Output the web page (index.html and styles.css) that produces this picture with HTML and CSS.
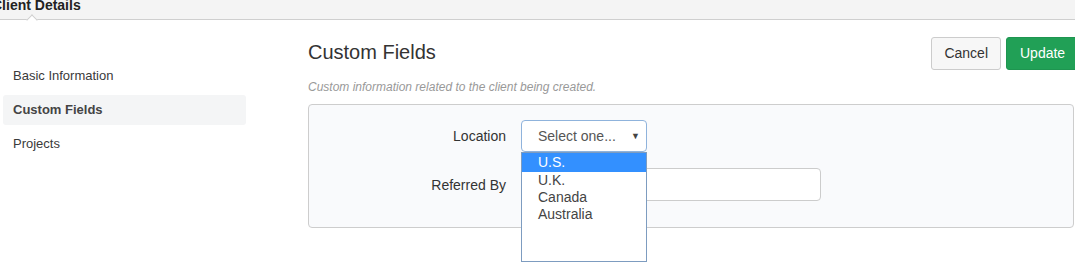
FILE: index.html
```html
<!DOCTYPE html>
<html>
    <head>
        <title>Client Details</title>
        <meta charset="UTF-8">
        <link rel="stylesheet" href="styles.css">
    </head>
    <body>
        <div class="top-bar">
            <p class="top-title">Client Details</p>
        </div>
        <div class="page">
            <div class="side-menu">
                <p class="menu-item">Basic Information</p>
                <p class="menu-item active">Custom Fields</p>
                <p class="menu-item">Projects</p>
            </div>
            <div class="main">
                <div class="main-head">
                    <h1 class="main-title">Custom Fields</h1>
                    <div class="buttons">
                        <div class="btn btn-cancel">Cancel</div>
                        <div class="btn btn-update">Update</div>
                    </div>
                </div>
                <p class="subtitle">Custom information related to the client being created.</p>
                <div class="fields">
                    <div class="field-row">
                        <label class="field-label">Location</label>
                        <div class="select-wrap">
                            <div class="select-box">
                                <span>Select one...</span>
                                <span class="arrow">&#9660;</span>
                            </div>
                            <div class="select-list">
                                <div class="option highlighted">U.S.</div>
                                <div class="option">U.K.</div>
                                <div class="option">Canada</div>
                                <div class="option">Australia</div>
                            </div>
                        </div>
                    </div>
                    <div class="field-row">
                        <label class="field-label">Referred By</label>
                        <div class="text-input"></div>
                    </div>
                </div>
            </div>
        </div>
    </body>
</html>
```

FILE: styles.css
```css
html{
    overflow: hidden;
}

body{
    margin: 0;
    min-height: 264px;
    background: white;
    font-family: "Liberation Sans", Arial, sans-serif;
    color: #333;
}

.top-bar{
    position: relative;
    height: 19px;
    background: #f4f4f4;
    border-bottom: 1px solid #cfcfcf;
}

/* little notch under the title */
.top-bar::after{
    content: "";
    position: absolute;
    left: 28px;
    bottom: -5px;
    width: 7px;
    height: 7px;
    background: white;
    border-top: 1px solid #cfcfcf;
    border-left: 1px solid #cfcfcf;
    transform: rotate(45deg);
}

.top-title{
    margin: 0 0 0 -8px;
    font-size: 14px;
    font-weight: bold;
    line-height: 20px;
    color: #222;
    position: relative;
    top: -5px;
}

.page{
    display: flex;
}

.side-menu{
    flex-shrink: 0;
    width: 243px;
    margin-left: 3px;
    padding-top: 41px;
    display: flex;
    flex-direction: column;
    gap: 4px;
}

.menu-item{
    margin: 0;
    height: 30px;
    line-height: 30px;
    padding-left: 10px;
    font-size: 13px;
    color: #3a3a3a;
    border-radius: 3px;
}

.active{
    background: #f4f5f6;
    font-weight: bold;
    color: #444;
}

.main{
    flex-shrink: 0;
    width: 772px;
    margin-left: 62px;
    padding-top: 17px;
}

.main-head{
    display: flex;
    justify-content: space-between;
    align-items: flex-start;
}

.main-title{
    margin: 3px 0 0 0;
    font-size: 20px;
    font-weight: normal;
    line-height: 24px;
    color: #333;
}

.buttons{
    display: flex;
    gap: 5px;
}

.btn{
    height: 31px;
    line-height: 31px;
    font-size: 14px;
    padding: 0 12px;
    border-radius: 3px;
    border: 1px solid;
}

.btn-cancel{
    background: #f7f7f7;
    border-color: #ccc;
    color: #333;
}

.btn-update{
    width: 46px;
    padding: 0 13px;
    background: #21a056;
    border-color: #1e9550;
    color: white;
}

.subtitle{
    margin: 10px 0 0 0;
    font-size: 12px;
    font-style: italic;
    line-height: 14px;
    color: #999;
}

.fields{
    margin: 10px 6px 0 0;
    padding: 15px 0 26px 0;
    background: #f9fafc;
    border: 1px solid #cdcdcd;
    border-radius: 4px;
    display: flex;
    flex-direction: column;
    gap: 16px;
}

.field-row{
    display: flex;
    align-items: center;
}

.field-label{
    width: 197px;
    text-align: right;
    font-size: 14px;
    color: #333;
}

.select-wrap{
    position: relative;
    margin-left: 15px;
}

.select-box{
    width: 102px;
    height: 30px;
    line-height: 30px;
    padding: 0 6px 0 16px;
    background: white;
    border: 1px solid #8fb3dc;
    border-radius: 4px;
    font-size: 14px;
    color: #555;
    display: flex;
    justify-content: space-between;
}

.arrow{
    font-size: 9px;
    color: #444;
}

.select-list{
    position: absolute;
    top: 32px;
    left: 0;
    width: 124px;
    height: 108px;
    background: white;
    border: 1px solid #7d9cc0;
    z-index: 2;
}

.option{
    height: 17px;
    line-height: 17px;
    padding-left: 16px;
    font-size: 14px;
    color: #444;
}

.highlighted{
    background: #3390ff;
    color: white;
    height: 19px;
    line-height: 19px;
}

.text-input{
    width: 298px;
    height: 31px;
    margin-left: 15px;
    background: white;
    border: 1px solid #ccc;
    border-radius: 4px;
}
```
